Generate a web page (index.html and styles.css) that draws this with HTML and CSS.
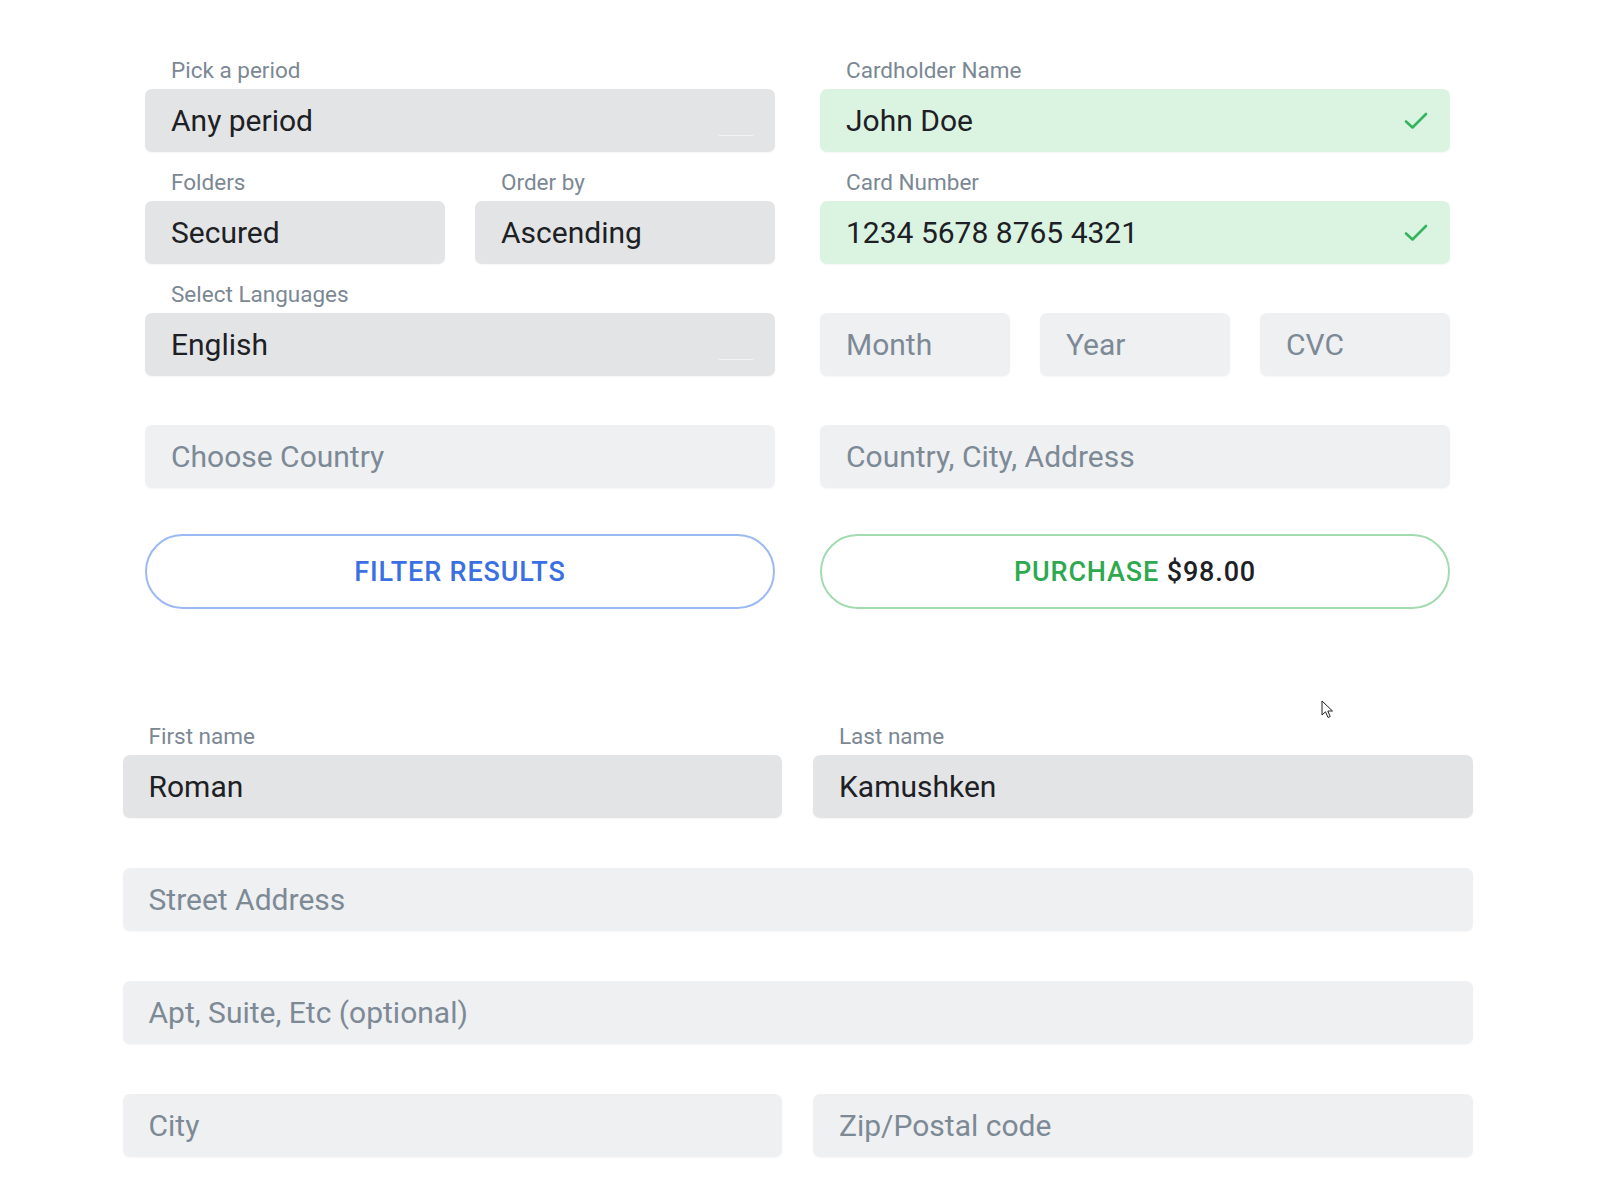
FILE: index.html
```html
<!DOCTYPE html>
<html lang="en">
<head>
<meta charset="utf-8">
<title>Forms</title>
<link rel="stylesheet" href="styles.css">
</head>
<body>
<main class="page">
  <section class="form-top">
    <div class="column">
      <div class="group">
        <div class="label">Pick a period</div>
        <div class="field filled select">Any period<span class="select-line"></span></div>
      </div>
      <div class="group split-2">
        <div class="sub">
          <div class="label">Folders</div>
          <div class="field filled">Secured</div>
        </div>
        <div class="sub">
          <div class="label">Order by</div>
          <div class="field filled">Ascending</div>
        </div>
      </div>
      <div class="group">
        <div class="label">Select Languages</div>
        <div class="field filled select">English<span class="select-line"></span></div>
      </div>
      <div class="group">
        <div class="label"></div>
        <div class="field empty">Choose Country</div>
      </div>
      <button class="pill pill-blue">FILTER RESULTS</button>
    </div>
    <div class="column">
      <div class="group">
        <div class="label">Cardholder Name</div>
        <div class="field valid">John Doe
          <svg class="check" viewBox="0 0 24 18" width="24" height="18"><path d="M2 9.5 L8.5 15.5 L22 2" fill="none" stroke="#35b45d" stroke-width="2.6" stroke-linecap="round" stroke-linejoin="round"/></svg>
        </div>
      </div>
      <div class="group">
        <div class="label">Card Number</div>
        <div class="field valid">1234 5678 8765 4321
          <svg class="check" viewBox="0 0 24 18" width="24" height="18"><path d="M2 9.5 L8.5 15.5 L22 2" fill="none" stroke="#35b45d" stroke-width="2.6" stroke-linecap="round" stroke-linejoin="round"/></svg>
        </div>
      </div>
      <div class="group split-3">
        <div class="sub"><div class="label"></div><div class="field empty">Month</div></div>
        <div class="sub"><div class="label"></div><div class="field empty">Year</div></div>
        <div class="sub"><div class="label"></div><div class="field empty">CVC</div></div>
      </div>
      <div class="group">
        <div class="label"></div>
        <div class="field empty">Country, City, Address</div>
      </div>
      <button class="pill pill-green"><span class="green-text">PURCHASE</span> <span class="price">$98.00</span></button>
    </div>
  </section>

  <section class="form-bottom">
    <div class="group">
      <div class="label">First name</div>
      <div class="field filled">Roman</div>
    </div>
    <div class="group">
      <div class="label">Last name</div>
      <div class="field filled">Kamushken</div>
    </div>
    <div class="group wide">
      <div class="label"></div>
      <div class="field empty">Street Address</div>
    </div>
    <div class="group wide">
      <div class="label"></div>
      <div class="field empty">Apt, Suite, Etc (optional)</div>
    </div>
    <div class="group">
      <div class="label"></div>
      <div class="field empty">City</div>
    </div>
    <div class="group">
      <div class="label"></div>
      <div class="field empty">Zip/Postal code</div>
    </div>
  </section>

  <svg class="cursor" viewBox="0 0 14 20" width="14" height="20"><path d="M1 1 L1 15 L4.5 11.8 L7 17.5 L9.2 16.5 L6.8 11 L11.5 11 Z" fill="#fff" stroke="#222" stroke-width="1" stroke-linejoin="round"/></svg>
</main>
</body>
</html>
```

FILE: styles.css
```css
* { box-sizing: border-box; }

html, body {
  margin: 0;
  padding: 0;
  background: #ffffff;
}

body {
  font-family: Roboto, "Noto Sans", "Liberation Sans", sans-serif;
  color: #1d2024;
}

.page {
  position: relative;
  width: 1600px;
  padding-top: 40px;
}

.form-top {
  width: 1305px;
  margin-left: 145px;
  display: grid;
  grid-template-columns: 1fr 1fr;
  column-gap: 45px;
}

.column {
  display: flex;
  flex-direction: column;
}

.group {
  padding-top: 15px;
}

.split-2, .split-3 {
  display: grid;
  column-gap: 30px;
}
.split-2 { grid-template-columns: 1fr 1fr; }
.split-3 { grid-template-columns: 1fr 1fr 1fr; }

.label {
  height: 30px;
  line-height: 30px;
  margin-bottom: 4px;
  padding-left: 26px;
  font-size: 22.5px;
  color: #7b8894;
  white-space: nowrap;
}

.field {
  position: relative;
  height: 63px;
  border-radius: 7px;
  padding: 0 26px;
  display: flex;
  align-items: center;
  font-size: 30px;
  white-space: nowrap;
  box-shadow: 0 1px 2px rgba(0, 0, 0, 0.04);
}

.filled {
  background: #e3e4e5;
  color: #1d2024;
}

.empty {
  background: #eff0f2;
  color: #7d8a96;
}

.valid {
  background: #dbf4e2;
  color: #1d2024;
  justify-content: space-between;
}

.check {
  display: block;
  margin-right: -4px;
}

.select-line {
  position: absolute;
  right: 22px;
  bottom: 16px;
  width: 34px;
  height: 1px;
  background: rgba(255, 255, 255, 0.55);
}

.pill {
  margin-top: 46px;
  height: 75px;
  border-radius: 38px;
  background: #ffffff;
  font-family: Roboto, "Noto Sans", "Liberation Sans", sans-serif;
  font-size: 27px;
  font-weight: 500;
  letter-spacing: 0.85px;
  cursor: pointer;
}

.pill-blue {
  border: 2px solid #9bb9f2;
  color: #3b70e3;
}

.pill-green {
  border: 2px solid #a3dbb0;
}

.green-text { color: #2fa94f; }
.price { color: #1d2024; }

.form-bottom {
  width: 1350px;
  margin: 112px 0 0 122.5px;
  display: grid;
  grid-template-columns: 1fr 1fr;
  column-gap: 31px;
  padding-bottom: 30px;
}

.form-bottom .group {
  padding-top: 16px;
}

.form-bottom .group:nth-child(1),
.form-bottom .group:nth-child(2) {
  padding-top: 0;
}

.wide {
  grid-column: 1 / -1;
}

.cursor {
  position: absolute;
  left: 1321px;
  top: 700px;
}
```
